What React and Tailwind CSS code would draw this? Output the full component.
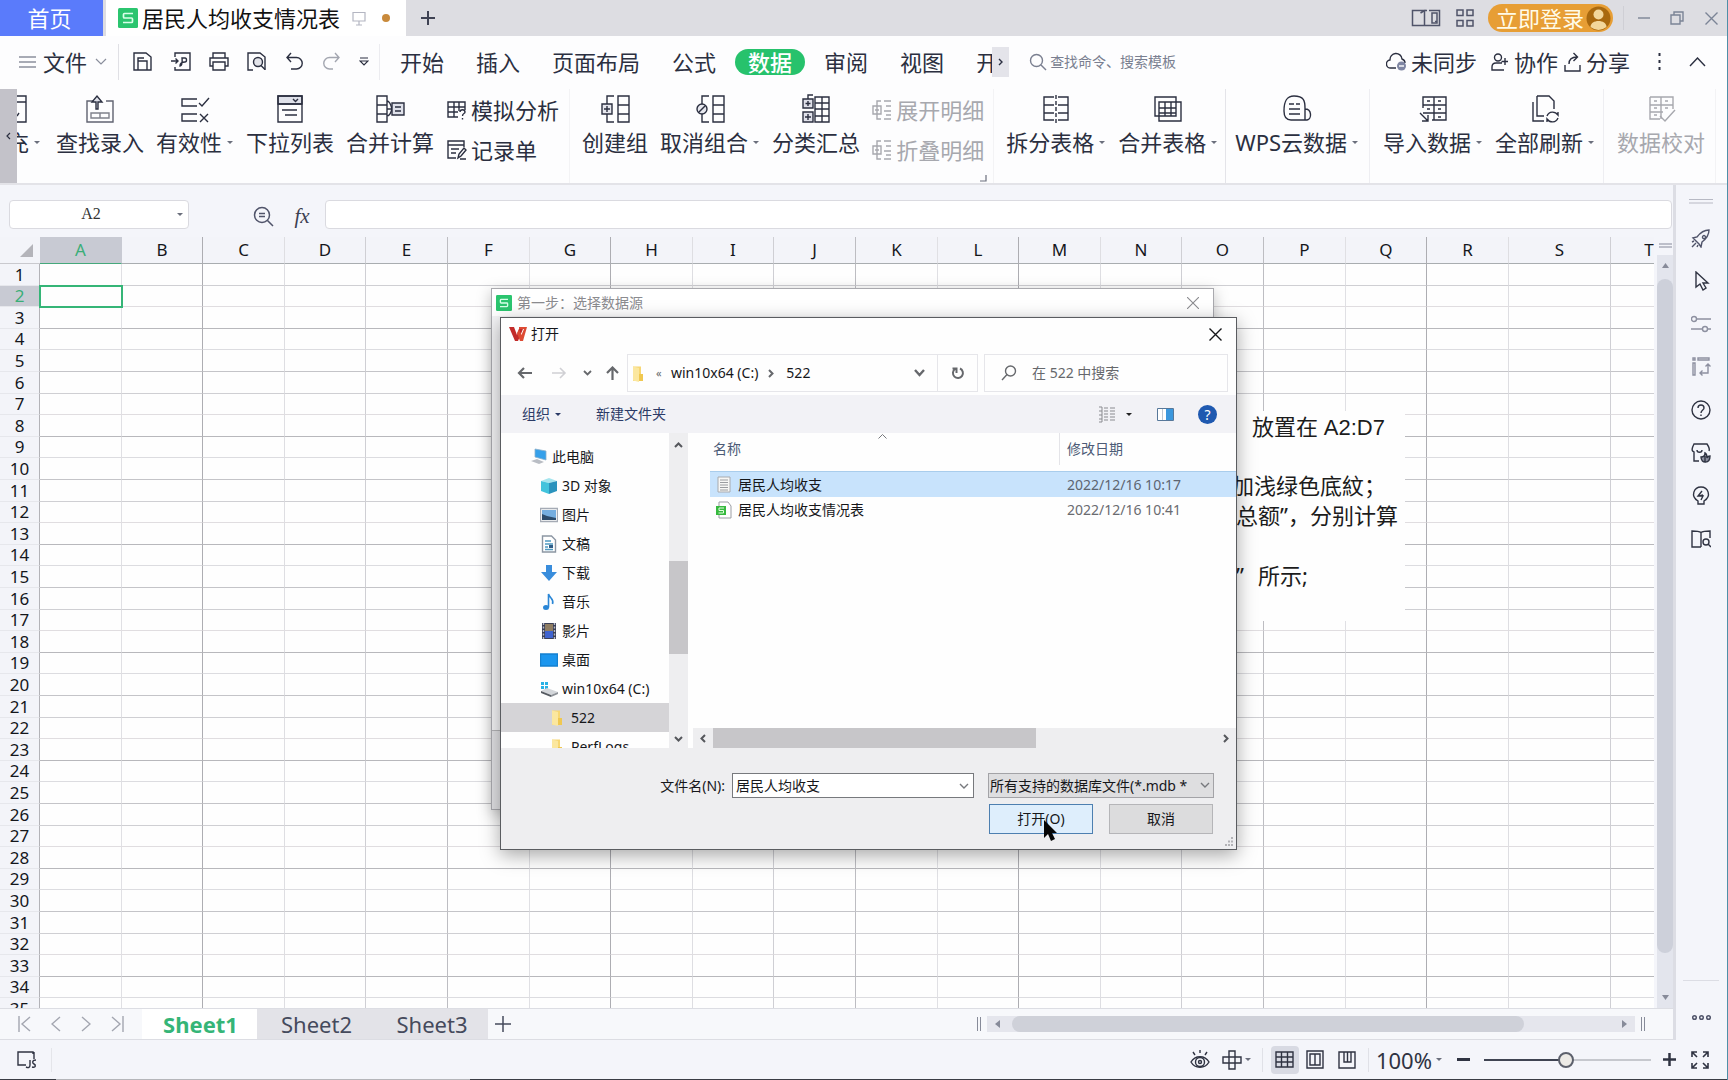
import clsx from 'clsx';

const COLS = 'ABCDEFGHIJKLMNOPQRST'.split('');
const ROWS = Array.from({ length: 35 }, (_, i) => i + 1);

const COL_W = ['w-[82px]', 'w-[81px]', 'w-[82px]', 'w-[81px]', 'w-[82px]'];
const COL_LINE = ['border-r-[#e0e0e4]', 'border-r-[#adadb2]', 'border-r-[#dedee2]', 'border-r-[#cfcfd4]', 'border-r-[#bdbdc2]'];
const ROW_H = ['h-[22px]', 'h-[21px]', 'h-[22px]', 'h-[21px]', 'h-[22px]'];
const ROW_LINE = ['border-b-[#cfcfd3]', 'border-b-[#e0dde0]', 'border-b-[#b8b8bc]', 'border-b-[#dcdce0]', 'border-b-[#c4c4c8]'];

function Svg({ w = 20, h = w, box, sw = 1.4, className, children }) {
  return (
    <svg
      width={w}
      height={h}
      viewBox={box || `0 0 ${w} ${h}`}
      fill="none"
      stroke="currentColor"
      strokeWidth={sw}
      className={clsx('shrink-0', className)}
      aria-hidden="true"
    >
      {children}
    </svg>
  );
}

function Arrow({ className = 'text-[#6b6f7c]' }) {
  return (
    <Svg w={8} h={5} className={className}>
      <path d="M1 1h6L4 4z" fill="currentColor" stroke="none" />
    </Svg>
  );
}

function SLogo({ size = 20 }) {
  return (
    <Svg w={size} box="0 0 20 20" sw={1.7}>
      <rect width="20" height="20" rx="1.5" fill="#2bc56f" stroke="none" />
      <path d="M15 5.5H6.5a1 1 0 0 0-1 1V9a1 1 0 0 0 1 1h7a1 1 0 0 1 1 1v2.500a1 1 0 0 1-1 1H5" stroke="#d9ffe9" />
    </Svg>
  );
}

function Folder() {
  return (
    <Svg w={12} h={17}>
      <path d="M1 1.500h8V16H1z" fill="#f7d774" stroke="none" />
      <path d="M1 1.500l6 1.500v14l-6-1.500z" fill="#fbe79f" stroke="none" />
      <path d="M7 9h4v7H7z" fill="#f0c850" stroke="none" />
    </Svg>
  );
}

function TitleBar() {
  return (
    <header className="flex h-9 shrink-0 items-stretch bg-[#dddde2] text-[22px] leading-none">
      <button className="w-[103px] bg-[#5a7bfb] pr-1 text-white">首页</button>
      <div className="ml-[3px] flex w-[300px] items-center bg-white pl-3">
        <SLogo />
        <span className="ml-1 whitespace-nowrap text-[#111]">居民人均收支情况表</span>
        <Svg w={14} h={15} sw={1.2} className="ml-3 text-[#b4b6c2]">
          <path d="M1 1.500h12v8.500H1zM7 10v4M4 14h6" />
        </Svg>
        <span className="ml-4 size-2 rounded-full bg-[#c98a3b]" />
      </div>
      <button className="ml-3 px-0.5 text-[#3f4354]" aria-label="新建">
        <Svg w={16} sw={2}><path d="M8 1v14M1 8h14" /></Svg>
      </button>
      <div className="ml-auto flex items-center">
        <Svg w={30} h={18} sw={1.5} className="text-[#50546a]">
          <path d="M18 16.500H1.500v-15H16M9.500 4l4-2.500v15M18 1.500h10.500v15H18M21 4h5v10h-5z" />
          <path d="M24 12.500h2" />
        </Svg>
        <Svg w={18} sw={1.5} className="ml-[15px] text-[#50546a]">
          <path d="M1 1h6v5.500H1zM11 1h6v5.500h-6zM1 11.500h6V17H1zM11 11.500h6V17h-6z" />
        </Svg>
        <button className="ml-3.5 flex h-7 items-center rounded-full bg-[#e79e35] pl-2 pr-0.5 text-[#fffbe8]">
          立即登录
          <Svg w={25} className="ml-0.5">
            <circle cx="12.500" cy="12.500" r="12" fill="#a9690f" stroke="none" />
            <circle cx="12.500" cy="8.500" r="5" fill="#f3d79b" stroke="none" />
            <path d="M4.500 21c0-8 16-8 16 0q-8 6-16 0z" fill="#f3d79b" stroke="none" />
          </Svg>
        </button>
        <span className="ml-[10px] h-6 w-px bg-[#cfcfd5]" />
        <button className="ml-3.5 text-[#7b8496]" aria-label="最小化">
          <Svg w={12}><path d="M0 6h12" /></Svg>
        </button>
        <button className="ml-5 text-[#7b8496]" aria-label="还原">
          <Svg w={14}><path d="M1 4h9v9H1zM4 4V1h9v9h-3" /></Svg>
        </button>
        <button className="ml-[21px] mr-[9px] text-[#7b8496]" aria-label="关闭">
          <Svg w={13}><path d="M.5.5l12 12M12.500.5l-12 12" /></Svg>
        </button>
      </div>
    </header>
  );
}

const quickIcons = [
  ['保存', <path key="a" d="M1 1h12l5 4v13H1zM5 18v-9h9v9M5 9V6h6" />],
  ['输出为PDF', <path key="a" d="M4 5V1h15v17H4v-3M0 9h7M4.500 6.500L7 9l-2.500 2.500M9 14c3 0 2-8 2-8h3c2 0 2 4 0 4-3 0-5 1-5 4z" />],
  ['打印', <path key="a" d="M4 6V1h12v5M4 14H1V6h18v8h-3M4 10h12v8H4z" />],
  ['打印预览', <g key="a"><path d="M6 18H1V1h12l5 4v13" /><circle cx="11" cy="10" r="4.500" fill="#e3e4ea" /><path d="M14 13.500l4 4" /></g>],
];

const menuTabs = ['开始', '插入', '页面布局', '公式', '数据', '审阅', '视图'];

function MenuBar() {
  return (
    <nav className="flex h-[53px] shrink-0 items-center whitespace-nowrap bg-[#fdfdfe] pb-0.5 text-[22px] leading-none text-[#2b2f40]">
      <button className="ml-[19px] flex items-center">
        <Svg w={17} h={12} sw={1.2} className="mr-[7px] text-[#555a6c]"><path d="M0 1h17M0 6h17M0 11h17" /></Svg>
        文件
        <Svg w={12} h={8} sw={1.2} className="ml-2 text-[#8a8e9c]"><path d="M1 1l5 5 5-5" /></Svg>
      </button>
      <span className="ml-[11px] h-9 w-px bg-[#e0e0e5]" />
      <div className="ml-3.5 flex items-center gap-[18px]">
        {quickIcons.map(([label, icon]) => (
          <button key={label} aria-label={label}><Svg w={20} h={19}>{icon}</Svg></button>
        ))}
        <button aria-label="撤销">
          <Svg w={19}><path d="M6 1L2 5.500 6 10M2 5.500h9.500a5.500 5.500 0 0 1 0 11.500H6" /></Svg>
        </button>
        <button aria-label="恢复" className="text-[#a3a6b0]">
          <Svg w={19}><path d="M13 1l4 4.500L13 10M17 5.500H7.500a5.500 5.500 0 0 0 0 11.500H11" /></Svg>
        </button>
        <button aria-label="自定义">
          <Svg w={10} h={9} sw={1.2}><path d="M1 1h8M1 4h8L5 8z" /></Svg>
        </button>
      </div>
      <span className="ml-2.5 h-9 w-px bg-[#ececf0]" />
      <div className="ml-1 flex items-center">
        {menuTabs.map(t => (
          <button
            key={t}
            className={clsx('h-[26px]', t === '数据' ? 'mx-[3px] rounded-full bg-[#27c26c] px-[13px] font-medium text-white' : 'px-4')}
          >
            {t}
          </button>
        ))}
        <button className="w-8 overflow-hidden pl-4 text-left">开</button>
      </div>
      <button className="flex h-[30px] w-[17px] items-center justify-center bg-[#e4e4ea]" aria-label="更多选项卡">
        <Svg w={5} h={8}><path d="M1 1l3 3-3 3" /></Svg>
      </button>
      <label className="ml-5 flex items-center text-[#7a7f90]">
        <Svg w={18} className="mr-[3px]"><circle cx="7.500" cy="7.500" r="6" /><path d="M12 12l5 5" /></Svg>
        <input className="w-[150px] bg-transparent text-[14px] outline-none placeholder:text-[#7a7f90]" placeholder="查找命令、搜索模板" aria-label="查找命令" />
      </label>
      <div className="ml-auto flex items-center">
        <button className="flex items-center">
          <Svg w={21} className="mr-1">
            <path d="M10 17H5a4 4 0 0 1-1-8 6 6 0 0 1 12-1c3 1 3 3 3 4" />
            <circle cx="15.500" cy="15" r="4.500" fill="#7f86a3" stroke="none" /><path d="M13 15h5" stroke="#fff" />
          </Svg>
          未同步
        </button>
        <button className="ml-3.5 flex items-center">
          <Svg w={17} h={18} className="mr-[6px]"><circle cx="7" cy="4.500" r="3.500" /><path d="M11 10H5c-3 0-4 2-4 4v3h12M14 5v7M10.500 8.500h7" /></Svg>
          协作
        </button>
        <button className="ml-1.5 flex items-center">
          <Svg w={18} h={20} className="mr-1"><path d="M5 12c0-6 4-7 8-7M9.500 1L13.500 5l-4 4M1 13v6h15v-6" /></Svg>
          分享
        </button>
        <button className="ml-7" aria-label="更多">
          <Svg w={3} h={17}><path d="M1.500 0v3M1.500 7v3M1.500 14v3" strokeWidth="2" /></Svg>
        </button>
        <button className="ml-7 mr-[21px]" aria-label="收起功能区">
          <Svg w={17} h={10}><path d="M1 9l7.500-8L16 9" /></Svg>
        </button>
      </div>
    </nav>
  );
}

const art = {
  lookup: <><path d="M9 6H1v21h26V6h-7" opacity=".75" /><path d="M10 14V7H6l5-6 5 6h-4v7z" fill="#dfe1ea" /><path d="M5 18h18v5H5zM14 18v5" opacity=".6" /></>,
  valid: <path d="M16 4H1v7h15M16 19H1v7h15M18 8l3 3 7-8M19 19l8 8M27 19l-8 8" />,
  dropdown: <><path d="M2 1h24v8H2z" fill="#dfe1ea" /><path d="M2 1h24v26H2zM2 9h24M17 4l2.500 2.500L22 4M6 15h15M9 20h12" /></>,
  merge: <><path d="M1 1h10v26H1zM1 10h10M1 19h10M11 6c3 0 5 8 5 8s-2 7-5 7M11 14h5" /><path d="M16 8h12v12H16z" fill="#dfe1ea" /><path d="M19 12h6M19 16h6" /></>,
  group: <><path d="M13 1H6v26h7M17 1h11v26H17zM17 10h11M17 19h11" /><path d="M1 9h10v10H1z" fill="#e6e7ee" /><path d="M6 11v6M3 14h6" /></>,
  ungroup: <><path d="M13 1H6v26h7M17 1h11v26H17zM17 10h11M17 19h11" /><circle cx="6" cy="14" r="5" fill="#e6e7ee" /><path d="M3 17l6-6" /></>,
  subtotal: <><path d="M13 2h14v25H13zM13 8h14M13 14h14M13 21h14M20 2v25M6 4V0h5" /><path d="M1 4h10v9H1zM1 17h10v10H1z" fill="#e0e1ea" /><path d="M6 6v5M3.500 8.500h5M6 19v6M3 22h6" /></>,
  split: <><path d="M12 2H2v23h10M2 10h10M2 18h10M16 2h10v23H16M16 10h10M16 18h10" /><path d="M14 0v28" strokeDasharray="4 2" /></>,
  mergeTable: <><path d="M1 2h21v19H1z" /><path d="M5 7h22v19H5z" /><path d="M5 13h17M5 18h17M11 7v14M17 7v14" /></>,
  cloud: <><path d="M22 25H8c-5 0-7-4-7-9 0-9 2-15 10-15 10 0 11 5 11 12v12h2c5-1 5-11-2-11M6 9h5M13 9h4M6 14h11M6 19h11" /></>,
  importData: <><path d="M4 13V2h23v23H13M4 10h23M4 18h23M15 2v23M8 6h3M19 6h3M8 14h3M19 14h3M19 22h3" /><path d="M1 18l8 8M9 20v6H3" /></>,
  refresh: <><path d="M6 1h12l5 5v8M6 1v20h7M2 7v19h11" /><path d="M16 21c2-5 8-5 11-1v-3M27 23c-2 5-8 5-11 1v3" /></>,
  check: <><path d="M3 2h23v12M3 2v22h10M3 10h23M3 17h13M14 2v22M7 6h3M18 6h3M7 13h3M18 13h3M7 20h3" /><path d="M13 21l5 5L28 15" /></>,
};

function RibbonItem({ icon, label, arrow, disabled }) {
  return (
    <button className={clsx('flex shrink-0 flex-col items-center gap-[7px] px-1.5', disabled && 'text-[#a7a8ae]')} disabled={disabled}>
      <Svg w={28} h={28} className="overflow-visible">{art[icon]}</Svg>
      <span className="flex items-center whitespace-nowrap">
        {label}
        {arrow && <span className="flex w-3 justify-end"><Arrow /></span>}
      </span>
    </button>
  );
}

function Divider({ className }) {
  return <span className={clsx('-mt-1.5 h-[95px] w-px shrink-0 bg-[#e4e4e9]', className)} />;
}

function Ribbon() {
  return (
    <section className="flex h-24 shrink-0 items-start overflow-hidden border-b-2 border-[#e3e3e8] bg-[#fdfdfe] text-[22px] leading-[24px] text-[#2b2f40]">
      <button className="flex h-full w-[17px] shrink-0 items-center justify-center bg-[#c3c2c9]" aria-label="向左滚动">
        <Svg w={5} h={8} sw={1.2}><path d="M4 1L1 4l3 3" /></Svg>
      </button>
      <div className="flex min-w-0 flex-1 items-start pt-1.5">
        <div className="mr-px flex w-8 shrink-0 justify-end overflow-hidden">
          <div className="flex flex-col items-end gap-[7px] pr-2">
            <Svg w={28} h={28} className="mr-3.5"><path d="M1 1h26v26H1zM1 7h26M20 18l-2 3" /></Svg>
            <span className="flex items-center whitespace-nowrap">填充<span className="flex w-3 justify-end"><Arrow /></span></span>
          </div>
        </div>
        <RibbonItem icon="lookup" label="查找录入" />
        <RibbonItem icon="valid" label="有效性" arrow />
        <RibbonItem icon="dropdown" label="下拉列表" />
        <RibbonItem icon="merge" label="合并计算" />
        <div className="flex shrink-0 flex-col gap-4 pl-[7px] pr-[10px] pt-[3px]">
          <button className="flex items-center gap-1">
            <Svg w={20}><path d="M11 17H1V2h17v8M1 7h17M1 12h10M7 2v15M12 2v9" /><path d="M13 12c0-3 5-3 5 0 0 2-2.500 1-2.500 4M15.500 18v1.500" /></Svg>
            模拟分析
          </button>
          <button className="flex items-center gap-1">
            <Svg w={20}><path d="M9 18H1V1h16v6M1 5h16M4 9h8M4 13h5" /><path d="M11 18l1-4 5-6 2 2-5 6zM13 19h6" /></Svg>
            记录单
          </button>
        </div>
        <Divider className="mr-[6px] opacity-40" />
        <RibbonItem icon="group" label="创建组" />
        <RibbonItem icon="ungroup" label="取消组合" arrow />
        <RibbonItem icon="subtotal" label="分类汇总" />
        <div className="flex shrink-0 flex-col gap-4 pl-1.5 pt-[3px] text-[#a7a8ae]">
          <button className="flex items-center gap-1" disabled>
            <Svg w={20}><path d="M9 1H5v18h4M1 6h8v8H1zM5 8v4M3 10h4" /><path d="M12 1h7M14 6h5M12 11h7M14 15h5M12 19h7" /></Svg>
            展开明细
          </button>
          <button className="flex items-center gap-1" disabled>
            <Svg w={20}><path d="M9 1H5v18h4M1 6h8v8H1zM3 10h4" /><path d="M12 1h7M14 6h5M12 11h7M14 15h5M12 19h7" /></Svg>
            折叠明细
          </button>
        </div>
        <Svg w={7} h={7} sw={1.2} className="-ml-1 mt-20 text-[#6b6f7c]"><path d="M6 0v6H0" /></Svg>
        <Divider className="ml-1.5 mr-[6px] opacity-40" />
        <RibbonItem icon="split" label="拆分表格" arrow />
        <RibbonItem icon="mergeTable" label="合并表格" arrow />
        <Divider className="ml-px mr-[3px]" />
        <RibbonItem icon="cloud" label="WPS云数据" arrow />
        <Divider className="ml-1 mr-[7px] opacity-60" />
        <RibbonItem icon="importData" label="导入数据" arrow />
        <RibbonItem icon="refresh" label="全部刷新" arrow />
        <Divider className="ml-0.5 mr-[7px] opacity-60" />
        <RibbonItem icon="check" label="数据校对" disabled />
        <Divider className="ml-1 opacity-40" />
      </div>
    </section>
  );
}

function FormulaBar() {
  return (
    <div className="flex h-[52px] shrink-0 items-center pb-px pl-[9px] pr-px pt-[7px]">
      <div className="flex h-[29px] w-[180px] items-center rounded-sm border border-[#dadae0] bg-white pr-1">
        <input
          className="w-full min-w-0 bg-transparent pr-1 text-center font-['Liberation_Serif',serif] text-[16px] text-[#333] outline-none"
          defaultValue="A2"
          aria-label="名称框"
        />
        <Arrow />
      </div>
      <Svg w={21} sw={1.5} className="ml-16 mt-1 text-[#50546a]"><circle cx="9" cy="9" r="7.500" /><path d="M14.500 14.500L20 20M6 7.500h6M6 10.500h6" /></Svg>
      <button className="ml-[17px] mt-1 w-[22px] font-['Liberation_Serif',serif] text-[21px] italic leading-none text-[#3c4052]">fx</button>
      <input className="ml-3 h-[29px] min-w-0 flex-1 rounded-sm border border-[#dadae0] bg-white px-2 outline-none" aria-label="编辑栏" />
    </div>
  );
}

function Grid() {
  return (
    <table className="w-[1688px] table-fixed border-separate border-spacing-0 text-[17px] leading-5 text-[#15171c]">
      <colgroup>
        <col className="w-[40px]" />
        {COLS.map((c, i) => (
          <col key={c} className={c === 'S' ? 'w-[102px]' : c === 'R' ? 'w-[82px]' : c === 'T' ? 'w-[77px]' : COL_W[i % 5]} />
        ))}
      </colgroup>
      <thead>
        <tr className="h-[27px]">
          <th className="border-b border-b-[#c9c9ce] bg-[#f3f4f9] p-0">
            <Svg w={13} h={13} className="ml-5"><path d="M13 0v13H0z" fill="#b4b4ba" stroke="none" /></Svg>
          </th>
          {COLS.map((c, i) => (
            <th
              key={c}
              className={clsx(
                'border-b border-r p-0 font-normal',
                c === 'A' ? 'border-b-[#45a87b] border-r-[#c8cad3] bg-[#c8cad3] text-[#3aae78]' : 'border-b-[#a9adb0] bg-[#f3f4f9]',
                c !== 'A' && COL_LINE[i % 5],
              )}
            >
              {c}
            </th>
          ))}
        </tr>
      </thead>
      <tbody>
        {ROWS.map((r, ri) => (
          <tr key={r} className={ROW_H[ri % 5]}>
            <th
              className={clsx(
                'border-b border-r border-b-[#e6e7ec] border-r-[#b3b3b8] p-0 font-normal',
                r === 2 ? 'bg-[#c8cad3] text-[#3aae78]' : 'bg-[#f3f4f9]',
              )}
            >
              {r}
            </th>
            {COLS.map((c, ci) => (
              <td
                key={c}
                className={clsx(
                  'border-b border-r p-0',
                  ROW_LINE[ri % 5],
                  COL_LINE[ci % 5],
                  r === 2 && c === 'A' && 'outline-2 -outline-offset-1 outline-[#35b577]',
                )}
              />
            ))}
          </tr>
        ))}
      </tbody>
    </table>
  );
}

function VScroll() {
  return (
    <div className="ml-[3px] flex w-4 shrink-0 flex-col items-center">
      <Svg w={13} h={18} sw={1.2} className="text-[#85899a]"><path d="M0 7h13M0 10h13" /></Svg>
      <div className="flex w-full flex-1 flex-col items-center bg-[#e3e5ed] py-2">
        <Svg w={7} h={5} className="text-[#878b99]"><path d="M0 5h7L3.500 0z" fill="currentColor" stroke="none" /></Svg>
        <div className="mb-[42px] mt-[11px] w-full flex-1 rounded-full bg-[#cdd0da]" />
        <Svg w={7} h={5} className="text-[#878b99]"><path d="M0 0h7L3.500 5z" fill="currentColor" stroke="none" /></Svg>
      </div>
    </div>
  );
}

function SheetTabs() {
  return (
    <div className="flex h-8 shrink-0 items-stretch border-b border-t border-[#dcdde3] bg-[#f7f8fb] text-[22px] leading-none text-[#454a5c]">
      <div className="flex w-[142px] items-center gap-5 pl-[18px] text-[#a3a6b0]">
        <button aria-label="第一张"><Svg w={13} h={16}><path d="M1 0v16M12 1L4 8l8 7" /></Svg></button>
        <button aria-label="上一张"><Svg w={10} h={16}><path d="M9 1L1 8l8 7" /></Svg></button>
        <button aria-label="下一张"><Svg w={10} h={16}><path d="M1 1l8 7-8 7" /></Svg></button>
        <button aria-label="最后一张"><Svg w={13} h={16}><path d="M12 0v16M1 1l8 7-8 7" /></Svg></button>
      </div>
      <button className="w-[115px] bg-white pl-0.5 font-bold text-[#35b577]">Sheet1</button>
      <button className="w-[115px] bg-[#e3e3e8] pl-1">Sheet2</button>
      <button className="w-[116px] bg-[#e3e3e8] pl-1">Sheet3</button>
      <button className="ml-[7px]" aria-label="新建工作表"><Svg w={16} sw={1.5}><path d="M8 0v16M0 8h16" /></Svg></button>
      <div className="ml-auto flex items-center text-[#878b99]">
        <Svg w={4} h={14} sw={1}><path d="M.5 0v14M3.500 0v14" /></Svg>
        <div className="ml-1.5 flex h-4 w-[648px] items-center bg-[#e5e6ed] px-2">
          <Svg w={5} h={8}><path d="M5 0v8L0 4z" fill="currentColor" stroke="none" /></Svg>
          <div className="ml-3 mr-[98px] h-full flex-1 rounded-full bg-[#cfd1d9]" />
          <Svg w={5} h={8}><path d="M0 0v8l5-4z" fill="currentColor" stroke="none" /></Svg>
        </div>
        <Svg w={4} h={14} sw={1} className="ml-1.5 mr-7"><path d="M.5 0v14M3.500 0v14" /></Svg>
      </div>
    </div>
  );
}

function StatusBar() {
  return (
    <footer className="shrink-0 bg-[#f4f5fa] text-[#2f3342]">
      <div className="flex h-[39px] items-center pr-[18px]">
        <button className="ml-[17px]" aria-label="JS宏">
          <Svg w={20} h={18}><path d="M9 14H1V1h15v2M17 1v7M13 9v5c0 3-2 3-4 2M19 9c-4 0-4 3-2 4s2 4-2 3" /></Svg>
        </button>
        <span className="ml-3.5 h-6 w-px bg-[#e4e5ea]" />
        <div className="ml-auto flex items-center">
          <button aria-label="护眼模式">
            <Svg w={20}><path d="M1 12c4-7 14-7 18 0-4 7-14 7-18 0zM10 0v3M3 2l2 3M17 2l-2 3" /><circle cx="10" cy="12" r="4.500" /><circle cx="10" cy="12" r="1.500" /></Svg>
          </button>
          <button className="ml-3 flex items-center gap-0.5" aria-label="阅读模式">
            <Svg w={20}><path d="M7 1h6v18H7zM1 7h18v6H1z" /></Svg>
            <Arrow />
          </button>
          <span className="ml-2.5 h-6 w-px bg-[#e0e1e7]" />
          <button className="ml-2 flex h-7 w-7 items-center justify-center rounded-sm bg-[#d8dae3]" aria-label="普通视图">
            <Svg w={19} h={17}><path d="M1 1h17v15H1zM1 6h17M1 11h17M6.500 1v15M12.500 1v15" /></Svg>
          </button>
          <button className="ml-[7px]" aria-label="分页预览">
            <Svg w={18} h={19}><path d="M1 1h16v17H1zM4 4h10v11H4zM9 4v11" /></Svg>
          </button>
          <button className="ml-3.5" aria-label="页面布局">
            <Svg w={18}><path d="M1 1h16v16H1zM6 1v10h7V1M9.500 1v10" /></Svg>
          </button>
          <span className="ml-3 h-6 w-px bg-[#e0e1e7]" />
          <button className="ml-[7px] flex items-center gap-[3px] text-[22px] leading-none">100%<Arrow /></button>
          <button className="ml-3.5" aria-label="缩小"><Svg w={13} sw={3}><path d="M0 6.500h13" /></Svg></button>
          <input
            type="range"
            defaultValue={49}
            aria-label="缩放"
            className="ml-3.5 h-4 w-[167px] appearance-none bg-transparent bg-[linear-gradient(to_right,#3f4452_49%,#c6c8ce_49%)] bg-[length:100%_2px] bg-center bg-no-repeat [&::-webkit-slider-thumb]:size-4 [&::-webkit-slider-thumb]:appearance-none [&::-webkit-slider-thumb]:rounded-full [&::-webkit-slider-thumb]:border-2 [&::-webkit-slider-thumb]:border-solid [&::-webkit-slider-thumb]:border-[#5c606c] [&::-webkit-slider-thumb]:bg-[#eceae6]"
          />
          <button className="ml-3" aria-label="放大"><Svg w={13} sw={2.5}><path d="M0 6.500h13M6.500 0v13" /></Svg></button>
          <button className="ml-[15px]" aria-label="全屏">
            <Svg w={18} sw={1.6}><path d="M1 6V1h5M1 1l5 5M12 1h5v5M17 1l-5 5M1 12v5h5M1 17l5-5M17 12v5h-5M17 17l-5-5" /></Svg>
          </button>
        </div>
      </div>
      <div className="flex h-px bg-[#3a3c44]">
        <span className="ml-14 w-[414px] bg-[#b5b6ba]" />
      </div>
    </footer>
  );
}

const sideIcons = [
  ['快捷', '#50546a', <path key="a" d="M18 2c-6 0-9 3-12 7l-4 1 2 2 4 4 2 3 1-5c4-3 7-6 7-12zM1 14l2-1M1 19l4-4M6 19l1-2M12 8a1.500 1.500 0 1 0 2 0 1.500 1.500 0 0 0-2 0" />],
  ['选择', '#2f3342', <path key="a" d="M5 1v15l4-3 3 6 3-2-3-5h5z" />],
  ['属性', '#8d90a0', <g key="a"><circle cx="3" cy="5" r="2.500" /><circle cx="14" cy="15" r="2.500" /><path d="M5.500 5H20M0 15h11.500M16.500 15H20" /></g>],
  ['分析', '#8d90a0', <path key="a" d="M2 1h2v2H2zM7 1h11v2H7zM2 6h2v12H2zM17 7v9H9M14.500 9.500L17 7l2.500 2.500M11.500 13.500L9 16l2.500 2.500" />],
  ['帮助', '#2f3342', <g key="a"><circle cx="10" cy="10" r="9" /><path d="M7 8c0-4 6-4 6 0 0 2-3 2-3 5M10 14.500V16" /></g>],
  ['商城', '#2f3342', <g key="a"><path d="M8 18H3V9C0 8 1 5 3 1h13c2 3 3 5 2 7M6 7c0 3 5 3 5 0" /><path d="M10 14c0 7 9 7 9-1-2 0-3 2-3 2s0-4-2-5c0 3-2 4-4 4zM14 13v6" fill="#8d90a0" /></g>],
  ['技巧', '#2f3342', <path key="a" d="M7 18v-3C-1 10 3 1 10 1s11 9 3 14v3zM11 5l-4 5h5l-2 4M8 10l4-1" />],
  ['图书', '#2f3342', <g key="a"><path d="M10 18H1V2c4 0 7 0 9 1.500C12 2 15 2 19 2v7M10 3.500V18" /><circle cx="15" cy="13" r="3" /><path d="M17 15l3 3" /></g>],
];

function SideBar() {
  return (
    <aside className="flex w-[54px] shrink-0 flex-col items-center border-l-[3px] border-[#dcdde4] bg-[#f4f5fa] pr-px pt-3.5">
      <Svg w={24} h={5} sw={1.2} className="text-[#b7b9c4]"><path d="M0 .5h24M0 4h24" /></Svg>
      <div className="mt-6 flex flex-col gap-[23px]">
        {sideIcons.map(([label, color, icon]) => (
          <button key={label} aria-label={label} style={{ color }}>
            <Svg w={20} className="block">{icon}</Svg>
          </button>
        ))}
      </div>
      <span className="mt-auto h-px w-9 bg-[#dcdde4]" />
      <button className="mb-[19px] mt-[33px] text-[#50546a]" aria-label="更多">
        <Svg w={21} h={7} sw={1.5}><circle cx="3.500" cy="3.500" r="1.800" /><circle cx="10.500" cy="3.500" r="1.800" /><circle cx="17.500" cy="3.500" r="1.800" /></Svg>
      </button>
    </aside>
  );
}

function Note() {
  return (
    <div className="absolute left-[1200px] top-[411px] h-[210px] w-[205px] whitespace-nowrap bg-[#fefefe] pl-8 text-[22px] leading-[30px] text-[#1c1c1c]">
      <p className="h-[30px] pl-5">放置在 <span className="font-['Liberation_Sans',sans-serif]">A2:D7</span></p>
      <p className="mt-[29px] h-[30px]">加浅绿色底紋；</p>
      <p className="h-[30px] pl-1">总额”，分别计算</p>
      <p className="mt-[30px] flex h-[30px] gap-3.5 pl-1"><span>”</span><span>所示;</span></p>
    </div>
  );
}

function SourceDialog() {
  return (
    <div className="absolute left-[491px] top-[288px] h-[522px] w-[723px] border border-[#a9a9ae] bg-[#f4f4f6] shadow-[0_4px_14px_rgba(0,0,0,0.25)]">
      <div className="flex h-[27px] items-center bg-white pl-1 pr-3.5 text-[14px] leading-5 text-[#8b8b8f]">
        <SLogo size={16} />
        <h2 className="ml-[5px]">第一步：选择数据源</h2>
        <button className="ml-auto" aria-label="关闭">
          <Svg w={12} sw={1.1}><path d="M0 0l12 12M12 0L0 12" /></Svg>
        </button>
      </div>
      <div className="mt-[414px] h-[79px] border-t border-[#b5b5b8] bg-[#e2e2e5]" />
    </div>
  );
}

const tree = [
  ['此电脑', 'pl-[29px]', <g key="i"><path d="M5 1l11 2v9L5 9z" fill="#35a0ea" stroke="#8ab0cc" strokeWidth=".8" /><path d="M1 13l6-2 7 3-5 2z" fill="#b9bdc4" stroke="none" /></g>],
  ['3D 对象', 'pl-[39px]', <g key="i" stroke="none"><path d="M1 4l8-3 8 3-8 2z" fill="#a5e5ee" /><path d="M1 4l8 2v11l-8-3z" fill="#42c3dc" /><path d="M17 4L9 6v11l8-3z" fill="#2a93bd" /></g>],
  ['图片', 'pl-[39px]', <g key="i"><path d="M.5 2.500h17v13H.5z" fill="#fff" stroke="#a5abb5" /><path d="M2 4h14v10H2z" fill="#75aee0" stroke="none" /><path d="M2 8l5 2 9 2v2H2z" fill="#2c4c6c" stroke="none" /></g>],
  ['文稿', 'pl-[39px]', <g key="i"><path d="M2.500 1h9l4 4v12h-13z" fill="#fff" stroke="#8c96a3" /><path d="M5 6h6M5 9h8M5 12h3M5 14.500h8" stroke="#4f9ac2" /><path d="M9 10h4v3H9z" fill="#2f5d88" stroke="none" /></g>],
  ['下载', 'pl-[39px]', <path key="i" d="M6 1h6v7h5l-8 9-8-9h5z" fill="#398ddc" stroke="none" />],
  ['音乐', 'pl-[39px]', <g key="i"><ellipse cx="6" cy="14.500" rx="3" ry="2.500" fill="#2a86d6" stroke="none" /><path d="M8.500 14.500V1c1 4 6 5 4 10" stroke="#2a86d6" strokeWidth="1.600" /></g>],
  ['影片', 'pl-[39px]', <g key="i"><path d="M2 1h14v16H2z" fill="#3a3f55" stroke="none" /><path d="M5 2h8v7H5z" fill="#8f7d62" stroke="none" /><path d="M5 9h8v7H5z" fill="#3f63cf" stroke="none" /><path d="M3.500 1v16M14.500 1v16" strokeDasharray="2 1.500" stroke="#b9bdcc" /></g>],
  ['桌面', 'pl-[39px]', <path key="i" d="M.5 3h17v12H.5z" fill="#1b96ee" stroke="#1580cf" />],
  ['win10x64 (C:)', 'pl-[39px]', <g key="i" stroke="none"><path d="M1 2h3v3H1zM5 2h3v3H5zM1 6h3v3H1zM5 6h3v3H5z" fill="#29b1e5" /><path d="M1 11l6-3 11 4-7 3z" fill="#d3d6da" /><path d="M1 11l10 4v2L1 13z" fill="#555a61" /><path d="M18 12v2l-7 3v-2z" fill="#8d9197" /></g>],
];

function TreePane() {
  return (
    <div className="flex w-[187px] shrink-0 overflow-hidden">
      <ul className="min-w-0 flex-1 pt-[9px]">
        {tree.map(([label, pad, icon]) => (
          <li key={label} className={clsx('flex h-[29px] items-center gap-1 whitespace-nowrap', pad)}>
            <Svg w={18}>{icon}</Svg>{label}
          </li>
        ))}
        {['522', 'PerfLogs'].map((f, i) => (
          <li key={f} className={clsx('flex h-[29px] items-center gap-2 pl-[50px]', i === 0 && 'bg-[#d5d4d7]')}>
            <Folder />{f}
          </li>
        ))}
      </ul>
      <div className="flex w-[19px] flex-col items-center bg-[#eeeef0] pb-1.5 pt-[9px] text-[#55575c]">
        <Svg w={9} h={6} sw={2}><path d="M1 5l3.500-3.500L8 5" /></Svg>
        <div className="mb-[82px] mt-[113px] w-full flex-1 bg-[#c7c6c9]" />
        <Svg w={9} h={6} sw={2}><path d="M1 1l3.500 3.500L8 1" /></Svg>
      </div>
    </div>
  );
}

function FilePane() {
  return (
    <div className="ml-[5px] flex min-w-0 flex-1 flex-col">
      <table className="ml-[17px] table-fixed border-separate border-spacing-0 text-left">
        <colgroup>
          <col />
          <col className="w-[177px]" />
        </colgroup>
        <thead className="text-[#4c5b76]">
          <tr className="h-8">
            <th className="relative p-0 pl-[3px] font-normal">
              名称
              <Svg w={9} h={5} sw={1} className="absolute left-[168px] top-px text-[#77797d]"><path d="M.5 4.500l4-4 4 4" /></Svg>
            </th>
            <th className="border-l border-[#e4e4e8] p-0 pl-[7px] font-normal">修改日期</th>
          </tr>
          <tr className="h-1.5"><td /></tr>
        </thead>
        <tbody>
          <tr className="h-[26px] bg-[#c8e3fc]">
            <td className="border-t border-[#a9cdec] p-0 pl-[7px]">
              <span className="flex items-center gap-[7px]">
                <Svg w={14} h={17} sw={1}>
                  <path d="M1 1h12v15H1z" fill="#f7f7f5" stroke="#a8aaae" />
                  <path d="M3 4h8M3 6.500h8M3 9h8M3 11.500h8M3 14h8" stroke="#9a9ca0" />
                </Svg>
                居民人均收支
              </span>
            </td>
            <td className="border-t border-[#a9cdec] p-0 pl-2 text-[#5d6571]">2022/12/16 10:17</td>
          </tr>
          <tr className="h-[25px]">
            <td className="p-0 pl-1.5">
              <span className="flex items-center gap-[6px]">
                <Svg w={16} h={18} sw={1}>
                  <path d="M3 1h9l3 4v12H3z" fill="#fff" stroke="#9b9da3" />
                  <path d="M0 5h10v9H0z" fill="#37b93f" stroke="none" />
                  <path d="M8 7H3v2.500h4.500V12H2.500" stroke="#e2ffe0" />
                </Svg>
                居民人均收支情况表
              </span>
            </td>
            <td className="p-0 pl-2 text-[#6a6b70]">2022/12/16 10:41</td>
          </tr>
        </tbody>
      </table>
      <div className="mt-auto flex h-5 items-center bg-[#eeeef0] px-[7px] text-[#55575c]">
        <Svg w={6} h={9} sw={2}><path d="M5 1L1.500 4.500 5 8" /></Svg>
        <div className="ml-[7px] mr-[187px] h-full flex-1 bg-[#c7c6c9]" />
        <Svg w={6} h={9} sw={2}><path d="M1 1l3.500 3.500L1 8" /></Svg>
      </div>
    </div>
  );
}

function OpenDialog() {
  return (
    <div className="absolute left-[500px] top-[317px] flex h-[533px] w-[737px] flex-col border border-[#5a5c60] bg-[#fefefe] text-[14px] leading-5 text-[#16171a] shadow-[0_5px_18px_rgba(0,0,0,0.35)]">
      <div className="flex h-8 shrink-0 items-center pl-2 pr-3.5">
        <Svg w={19} h={16}>
          <path d="M0 1h5l3 8 2-6h4L9 15H6z" fill="#c22b2a" stroke="none" />
          <path d="M10 1h8l-4 14h-3L8 7l2-4 2.500 6L15 3h-5z" fill="#dd4a33" stroke="none" />
        </Svg>
        <h2 className="ml-[3px]">打开</h2>
        <button className="ml-auto" aria-label="关闭"><Svg w={13}><path d="M.5.5l12 12M12.500.5l-12 12" /></Svg></button>
      </div>

      <div className="mt-1 flex h-[38px] shrink-0 items-center pl-4 pr-2 text-[#66686c]">
        <Svg w={15} h={12} sw={2.2}><path d="M15 6H2M7 1L2 6l5 5" /></Svg>
        <Svg w={15} h={12} sw={1.6} className="ml-5 text-[#d0d0d4]"><path d="M0 6h13M8 1l5 5-5 5" /></Svg>
        <Svg w={9} h={6} sw={1.8} className="ml-4"><path d="M1 1l3.500 3.500L8 1" /></Svg>
        <Svg w={13} h={14} sw={2.2} className="ml-3.5"><path d="M6.500 14V2M1 7l5.500-5.500L12 7" /></Svg>
        <div className="ml-2 flex h-full flex-1 items-center border border-[#e6e6ea] pl-1 text-[#16171a]">
          <Folder />
          <span className="ml-3 w-[15px] text-[11px] text-[#66686c]">«</span>
          <span>win10x64 (C:)</span>
          <Svg w={6} h={9} sw={2} className="ml-2.5 mr-3 text-[#66686c]"><path d="M1 1l3.500 3.500L1 8" /></Svg>
          <span>522</span>
          <Svg w={11} h={8} sw={2.4} className="ml-auto mr-3 text-[#66686c]"><path d="M1 1l4.500 5L10 1" /></Svg>
        </div>
        <button className="flex h-full w-10 items-center justify-center border-y border-r border-[#e6e6ea]" aria-label="刷新">
          <Svg w={14} sw={2}><path d="M9 2.500a5 5 0 1 1-5 .5M1.500 2.500h4V7" /></Svg>
        </button>
        <label className="ml-1.5 flex h-full w-[244px] items-center border border-[#e6e6ea] pl-4">
          <Svg w={16}><circle cx="9.500" cy="6" r="5" /><path d="M6 9.500L1 15" /></Svg>
          <input className="ml-[15px] min-w-0 flex-1 bg-transparent outline-none placeholder:text-[#66686c]" placeholder="在 522 中搜索" aria-label="搜索" />
        </label>
      </div>

      <div className="mt-[3px] flex h-[38px] shrink-0 items-center bg-[#f2f2f6] pl-[21px] pr-[19px] text-[#2b3a66]">
        <button className="flex items-center gap-1">组织<Arrow className="text-[#2b3a66]" /></button>
        <button className="ml-[34px]">新建文件夹</button>
        <button className="ml-auto flex items-center gap-2.5" aria-label="更改视图">
          <Svg w={17} sw={1} className="text-[#8a8b90]"><path d="M1 1h3v15H1M6 2h4M12 2h5M6 5h4M12 5h5M6 8h4M12 8h5M6 11h4M12 11h5M6 14h4M12 14h5M1 5h3M1 9h3M1 13h3" /></Svg>
          <Arrow className="text-[#222]" />
        </button>
        <button className="ml-6" aria-label="预览窗格">
          <Svg w={17} h={13} sw={1}><path d="M.5.5h16v12H.5z" fill="#fff" stroke="#57789a" /><path d="M9 1h7v11H9z" fill="#3b97dd" stroke="none" /><path d="M5.500 1v11" stroke="#c0c8d2" /></Svg>
        </button>
        <button className="ml-6 size-[19px] rounded-full bg-[#1f59b0] text-[14px] leading-[19px] text-white" aria-label="帮助">?</button>
      </div>

      <div className="flex min-h-0 flex-1">
        <TreePane />
        <FilePane />
      </div>

      <div className="relative flex h-[101px] shrink-0 flex-col items-end bg-[#eeeef0] pr-[22px] pt-[25px]">
        <div className="flex items-center">
          <label htmlFor="fname" className="mr-[7px]">文件名(N):</label>
          <div className="flex h-[25px] w-[242px] items-center border border-[#77797d] bg-white pl-[3px] pr-1">
            <input id="fname" className="min-w-0 flex-1 bg-transparent outline-none" defaultValue="居民人均收支" />
            <Svg w={10} h={6} className="text-[#77797d]"><path d="M1 1l4 4 4-4" /></Svg>
          </div>
          <div className="relative ml-3.5">
            <select className="block h-[25px] w-[226px] appearance-none overflow-hidden border border-[#a3a3a7] bg-[#dedee0] pl-px pr-5 outline-none" aria-label="文件类型">
              <option>所有支持的数据库文件(*.mdb *</option>
            </select>
            <Svg w={10} h={6} className="pointer-events-none absolute right-1 top-[9px] text-[#77797d]"><path d="M1 1l4 4 4-4" /></Svg>
          </div>
        </div>
        <div className="mt-1.5 flex gap-4 pr-px">
          <button className="h-[30px] w-[104px] border border-[#4d7fb0] bg-[#deeefc]">打开(O)</button>
          <button className="h-[30px] w-[104px] border border-[#b5b5b8] bg-[#dcdcdd]">取消</button>
        </div>
        <Svg w={10} h={10} className="absolute bottom-0.5 right-0.5 text-[#b2b2b6]">
          <path d="M7 1h2M4 4.500h2M7 4.500h2M1 8h2M4 8h2M7 8h2" strokeWidth="2" />
        </Svg>
        <Svg w={14} h={22} className="absolute bottom-[7px] right-[178px]">
          <path d="M0 0v18l4-4 3 7 4-2-3-6h5z" fill="#060606" stroke="none" />
        </Svg>
      </div>
    </div>
  );
}

export default function App() {
  return (
    <div className="relative flex h-screen flex-col overflow-hidden border-r border-[#4f8fa8] bg-[#f4f5fa] font-['Noto_Sans','Noto_Sans_CJK_SC',sans-serif]">
      <TitleBar />
      <MenuBar />
      <Ribbon />
      <main className="flex min-h-0 flex-1">
        <div className="flex min-w-0 flex-1 flex-col">
          <FormulaBar />
          <div className="flex min-h-0 flex-1">
            <div className="min-w-0 flex-1 overflow-hidden bg-[#fefefe]"><Grid /></div>
            <VScroll />
          </div>
          <SheetTabs />
        </div>
        <SideBar />
      </main>
      <StatusBar />
      <Note />
      <SourceDialog />
      <OpenDialog />
    </div>
  );
}
